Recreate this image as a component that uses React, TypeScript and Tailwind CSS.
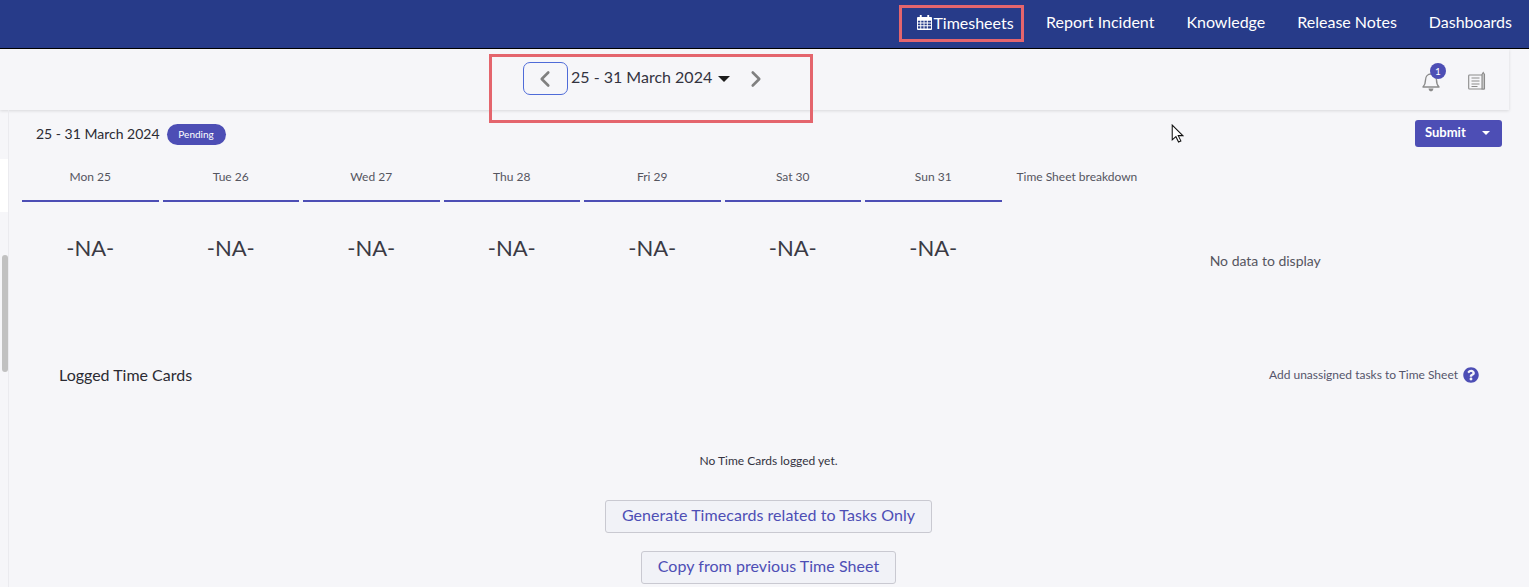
import { ChevronLeft, ChevronRight } from "lucide-react";
import { FaQuestionCircle } from "react-icons/fa";

const days = ["Mon 25", "Tue 26", "Wed 27", "Thu 28", "Fri 29", "Sat 30", "Sun 31"];
const nav = ["Report Incident", "Knowledge", "Release Notes", "Dashboards"];

function CalendarIcon() {
  return (
    <svg viewBox="0 0 16 16" className="h-[15px] w-[15px]" fill="currentColor">
      <path fillRule="evenodd" d="M3 0h2v2h6V0h2v2h2a1 1 0 0 1 1 1v12a1 1 0 0 1-1 1H1a1 1 0 0 1-1-1V3a1 1 0 0 1 1-1h2V0zM1 6v2h2.5V6H1zm3.5 0v2H7V6H4.500zM8 6v2h2.500V6H8zm3.500 0v2H15V6h-3.500zM1 9v2h2.500V9H1zm3.500 0v2H7V9H4.500zM8 9v2h2.500V9H8zm3.500 0v2H15V9h-3.500zM1 12v2.500h2.500V12H1zm3.500 0v2.500H7V12H4.500zM8 12v2.500h2.500V12H8zm3.500 0v2.500H15V12h-3.500z" />
    </svg>
  );
}

function BellIcon() {
  return (
    <svg viewBox="0 0 20 24" className="h-[24px] w-[22px]" fill="none" stroke="#8b8b8b" strokeWidth="1.400">
      <path d="M2 18c2-2 2.500-4 2.500-7 0-3.500 2.300-6 5.500-6s5.500 2.500 5.500 6c0 3 .5 5 2.500 7H2z" strokeLinejoin="round" />
      <path d="M7.500 19.500c.4 2 1.300 2.800 2.500 2.800s2.100-.8 2.500-2.800z" fill="#8b8b8b" stroke="none" />
    </svg>
  );
}

function NotesIcon() {
  return (
    <svg viewBox="0 0 20 20" className="h-[20px] w-[20px]" fill="none" stroke="#8b8b8b" strokeWidth="1.100">
      <path d="M15 4H2.500a.8.8 0 0 0-.8.8v12.400a.8.8 0 0 0 .8.8H17" />
      <path d="M4.500 7h8M4.500 10h8M4.500 13h8M4.500 15.500h6" />
      <path d="M15 3.500 16.200 1.500l1.300 2V18h-2.500z" fill="#c8c8c8" />
    </svg>
  );
}

export default function App() {
  return (
    <div className="relative h-[587px] w-[1529px] overflow-hidden bg-[#f6f6f9] font-['Lato','Carlito','Liberation_Sans',sans-serif] text-[#2f2f3a]">
      <header className="flex h-[49px] justify-end border-b border-black bg-[#273b89] pr-[17px] text-[16px] text-white">
        <div className="mr-[22px] mt-[5px] flex h-[37px] w-[125px] items-center justify-center border-[3px] border-[#e4656d] pb-[2px] pl-[8px]">
          <CalendarIcon />
          <span className="ml-[1px]">Timesheets</span>
        </div>
        <div className="flex items-center gap-[32px] pb-[4px]">
          {nav.map((item) => (
            <span key={item}>{item}</span>
          ))}
        </div>
      </header>

      <div className="flex h-[61px] w-[1509px] items-start bg-[#f6f6f9] shadow-[0_1px_3px_rgba(0,0,0,0.12)]">
        <div className="ml-[523px] mt-[13px] flex items-center">
          <button className="flex h-[33px] w-[45px] items-center justify-center rounded-[7px] border-[1.5px] border-[#4f6bd8] pr-[1px] text-[#808080]">
            <ChevronLeft size={26} strokeWidth={2.400} />
          </button>
          <span className="mb-[3px] ml-[3px] text-[16px] text-[#33333f]">25 - 31 March 2024</span>
          <span className="ml-[6px] h-0 w-0 border-x-[6px] border-t-[6px] border-x-transparent border-t-[#1c1c1c]" />
          <ChevronRight size={26} strokeWidth={2.400} className="ml-[13px] text-[#808080]" />
        </div>
        <div className="ml-auto mr-[22px] mt-[13px] flex items-center gap-[25px]">
          <div className="relative mt-[7px] flex">
            <BellIcon />
            <span className="absolute left-[10px] top-[-6px] flex h-[16px] w-[16px] items-center justify-center rounded-full bg-[#4d4eb5] text-[10px] text-white">1</span>
          </div>
          <div className="mt-[6px] flex">
            <NotesIcon />
          </div>
        </div>
      </div>

      <div className="flex h-[477px]">
        <aside className="relative w-[9px] shrink-0 border-r border-[#ebebef]">
          <div className="mt-[49px] h-[53px] bg-white" />
          <div className="ml-[2px] mt-[43px] h-[117px] w-[6px] rounded-[3px] bg-[#c1c1c1]" />
        </aside>

        <main className="flex-1 pl-[13px] pr-[27px]">
          <div className="flex h-[49px] items-center justify-between pb-[2px]">
            <div className="ml-[14px] flex items-center">
              <span className="text-[14px] text-[#2b2b33]">25 - 31 March 2024</span>
              <span className="ml-[7px] mt-[1px] flex h-[21px] w-[59px] items-center justify-center rounded-full bg-[#4d4eb5] text-[10px] text-white">Pending</span>
            </div>
            <div className="flex h-[27px] w-[87px] items-center rounded-[3px] bg-[#4d4eb5] pb-[2px] text-[13px] font-bold text-white">
              <span className="ml-[10px]">Submit</span>
              <span className="ml-[16px] h-0 w-0 border-x-[4.500px] border-t-[4.500px] border-x-transparent border-t-white" />
            </div>
          </div>

          <div className="flex">
            <div className="grid w-[979.500px] grid-cols-7 gap-x-[4px]">
              {days.map((d) => (
                <div key={d} className="flex flex-col items-center">
                  <div className="flex h-[43px] w-full items-center justify-center border-b-2 border-[#4d4eb5] pb-[6px] text-[12px] text-[#55555f]">{d}</div>
                  <div className="mt-[31px] text-[22px] leading-[30px] text-[#3a3a44]">-NA-</div>
                </div>
              ))}
            </div>
            <div className="relative flex-1">
              <div className="ml-[15px] flex h-[36px] items-center text-[12px] text-[#55555f]">Time Sheet breakdown</div>
              <div className="mt-[56px] pl-[27px] text-center text-[14px] leading-[20px] text-[#55555f]">No data to display</div>
            </div>
          </div>

          <div className="mt-[92px] flex items-center justify-between">
            <span className="ml-[37px] text-[16px] text-[#2b2b33]">Logged Time Cards</span>
            <div className="mr-[23px] flex items-center gap-[5px] text-[12px] text-[#55556b]">
              <span>Add unassigned tasks to Time Sheet</span>
              <FaQuestionCircle size={16} className="text-[#4d4eb5]" />
            </div>
          </div>

          <div className="mt-[66px] flex flex-col items-center pl-[13px]">
            <span className="text-[12px] leading-[16px] text-[#33333f]">No Time Cards logged yet.</span>
            <button className="mt-[31px] flex h-[33px] w-[327px] items-center justify-center rounded-[3px] border border-[#c9c9d1] bg-[#f1f2f7] pb-[3px] text-[16px] tracking-[0.05px] text-[#4d4eb5]">Generate Timecards related to Tasks Only</button>
            <button className="mt-[18px] flex h-[33px] w-[255px] items-center justify-center rounded-[3px] border border-[#c9c9d1] bg-[#f1f2f7] pb-[3px] text-[16px] tracking-[0.05px] text-[#4d4eb5]">Copy from previous Time Sheet</button>
          </div>
        </main>
      </div>

      <div className="absolute left-[489px] top-[54px] h-[69px] w-[324px] border-[3px] border-[#e4656d]" />

      <svg viewBox="0 0 12 18" className="absolute left-[1171px] top-[124px] h-[19px] w-[13px]" fill="#fff" stroke="#111" strokeWidth="1">
        <path d="M1 1v14l3.500-3 2.500 5 2.200-1-2.500-5H11z" />
      </svg>
    </div>
  );
}
